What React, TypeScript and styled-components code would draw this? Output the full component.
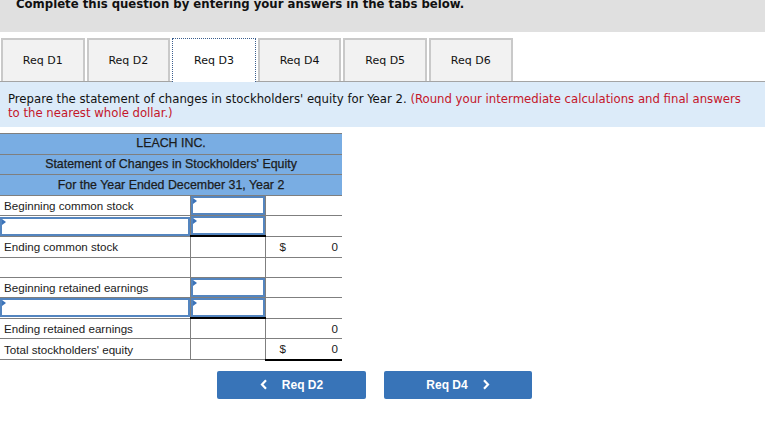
import React from "react";
import styled, { createGlobalStyle, css } from "styled-components";

const Global = createGlobalStyle`
  html, body { margin: 0; padding: 0; background: #ffffff; }
  body { font-family: "Liberation Sans", Arial, sans-serif; }
`;

const Page = styled.div`
  width: 765px;
  height: 448px;
  overflow: hidden;
  background: #fff;
`;

const TopBar = styled.div`
  height: 32px;
  background: #e0e0e0;
  overflow: hidden;
  padding-left: 16px;
`;

const TopText = styled.div`
  font-family: "DejaVu Sans Condensed", "DejaVu Sans", sans-serif;
  font-stretch: condensed;
  font-weight: bold;
  font-size: 13px;
  line-height: 14px;
  margin-top: -3px;
  color: #111;
  white-space: nowrap;
`;

const Tabs = styled.div`
  display: flex;
  gap: 2px;
  margin-top: 6px;
  padding-left: 1px;
  height: 43px;
  border-bottom: 1px solid #a4a4a4;
`;

const Tab = styled.div<{ $active?: boolean }>`
  box-sizing: border-box;
  width: 83.6px;
  height: 43px;
  background: #f2f2f2;
  border: 2px solid #c9c9c9;
  border-bottom: none;
  display: flex;
  align-items: center;
  justify-content: center;
  font-family: "DejaVu Sans", Verdana, sans-serif;
  font-size: 11px;
  color: #111;
  ${(p) =>
    p.$active &&
    css`
      background: #fff;
      border: 1px dotted #3b5f8f;
      border-bottom: none;
      height: 44px;
      position: relative;
      z-index: 1;
    `}
`;

const Instructions = styled.div`
  background: #dcebf9;
  padding: 10px 16px 7px 8px;
  font-family: "DejaVu Sans Condensed", "DejaVu Sans", sans-serif;
  font-stretch: condensed;
  font-size: 13px;
  line-height: 14px;
  color: #111;
`;

const Red = styled.span`
  color: #c4162a;
`;

const Table = styled.table`
  margin-top: 6px;
  border-collapse: collapse;
  table-layout: fixed;
  width: 342px;
  font-family: "Liberation Sans", Arial, sans-serif;
  font-size: 11.6px;
  line-height: 13px;
  color: #1a1a1a;
`;

const HeadCell = styled.td`
  background: #79ade3;
  border-top: 1px solid #7f7f7f;
  border-bottom: 1px solid #7f7f7f;
  height: 19.7px;
  padding: 0;
  text-align: center;
  font-size: 12.4px;
  color: #1c1c1c;
  -webkit-text-stroke: 0.25px #1c1c1c;
`;

const Cell = styled.td<{ $line?: "black" | "total"; $last?: boolean }>`
  height: 19.2px;
  padding: 0 4px;
  border-bottom: 1px solid #7f7f7f;
  border-right: ${(p) => (p.$last ? "none" : "1px solid #7f7f7f")};
  white-space: nowrap;
  ${(p) => p.$line === "black" && css`border-bottom: 2px solid #000;`}
  ${(p) => p.$line === "total" && css`border-bottom: 2px solid #000;`}
`;

const InputCell = styled.td<{ $line?: boolean }>`
  height: 19.2px;
  padding: 0;
  border-bottom: ${(p) => (p.$line ? "2px solid #000" : "1px solid #7f7f7f")};
  border-right: 1px solid #7f7f7f;
`;

const InputBox = styled.div`
  position: relative;
  box-sizing: border-box;
  height: 19.2px;
  border: 2px solid #5485bf;
  background: #fff;
  &::before {
    content: "";
    position: absolute;
    left: 0;
    top: 0;
    border-top: 3px solid transparent;
    border-bottom: 3px solid transparent;
    border-left: 4px solid #3b73b9;
  }
`;

const Money = styled.div`
  display: flex;
  justify-content: space-between;
  padding-left: 10px;
`;

const Nav = styled.div`
  display: flex;
  gap: 18px;
  margin: 10px 0 0 217px;
`;

const NavButton = styled.button<{ $w: number }>`
  width: ${(p) => p.$w}px;
  height: 28px;
  background: #3874b8;
  border: none;
  border-radius: 2px;
  color: #fff;
  font-family: "Liberation Sans", Arial, sans-serif;
  font-weight: bold;
  font-size: 12px;
  display: flex;
  align-items: center;
  justify-content: center;
  gap: 14px;
  padding: 0;
`;

const Chevron = ({ dir }: { dir: "left" | "right" }) => (
  <svg width="8" height="11" viewBox="0 0 8 11">
    <path
      d={dir === "left" ? "M6 1.2 L2 5.5 L6 9.8" : "M2 1.2 L6 5.5 L2 9.8"}
      fill="none"
      stroke="#fff"
      strokeWidth="2.2"
    />
  </svg>
);

const tabs = ["Req D1", "Req D2", "Req D3", "Req D4", "Req D5", "Req D6"];

export default function App() {
  return (
    <Page>
      <Global />
      <TopBar>
        <TopText>Complete this question by entering your answers in the tabs below.</TopText>
      </TopBar>
      <Tabs>
        {tabs.map((t) => (
          <Tab key={t} $active={t === "Req D3"}>
            {t}
          </Tab>
        ))}
      </Tabs>
      <Instructions>
        Prepare the statement of changes in stockholders' equity for Year 2.{" "}
        <Red>(Round your intermediate calculations and final answers to the nearest whole dollar.)</Red>
      </Instructions>
      <Table>
        <colgroup>
          <col style={{ width: 190 }} />
          <col style={{ width: 75 }} />
          <col style={{ width: 77 }} />
        </colgroup>
        <tbody>
          <tr><HeadCell colSpan={3}>LEACH INC.</HeadCell></tr>
          <tr><HeadCell colSpan={3}>Statement of Changes in Stockholders' Equity</HeadCell></tr>
          <tr><HeadCell colSpan={3}>For the Year Ended December 31, Year 2</HeadCell></tr>
          <tr>
            <Cell>Beginning common stock</Cell>
            <InputCell><InputBox /></InputCell>
            <Cell $last />
          </tr>
          <tr>
            <InputCell><InputBox /></InputCell>
            <InputCell $line><InputBox /></InputCell>
            <Cell $last />
          </tr>
          <tr>
            <Cell>Ending common stock</Cell>
            <Cell />
            <Cell $last><Money><span>$</span><span>0</span></Money></Cell>
          </tr>
          <tr>
            <Cell />
            <Cell />
            <Cell $last />
          </tr>
          <tr>
            <Cell>Beginning retained earnings</Cell>
            <InputCell><InputBox /></InputCell>
            <Cell $last />
          </tr>
          <tr>
            <InputCell><InputBox /></InputCell>
            <InputCell $line><InputBox /></InputCell>
            <Cell $last />
          </tr>
          <tr>
            <Cell>Ending retained earnings</Cell>
            <Cell />
            <Cell $last><Money><span /><span>0</span></Money></Cell>
          </tr>
          <tr>
            <Cell>Total stockholders' equity</Cell>
            <Cell />
            <Cell $last $line="total"><Money><span>$</span><span>0</span></Money></Cell>
          </tr>
        </tbody>
      </Table>
      <Nav>
        <NavButton $w={149}>
          <Chevron dir="left" />
          <span>Req D2</span>
        </NavButton>
        <NavButton $w={148}>
          <span>Req D4</span>
          <Chevron dir="right" />
        </NavButton>
      </Nav>
    </Page>
  );
}
